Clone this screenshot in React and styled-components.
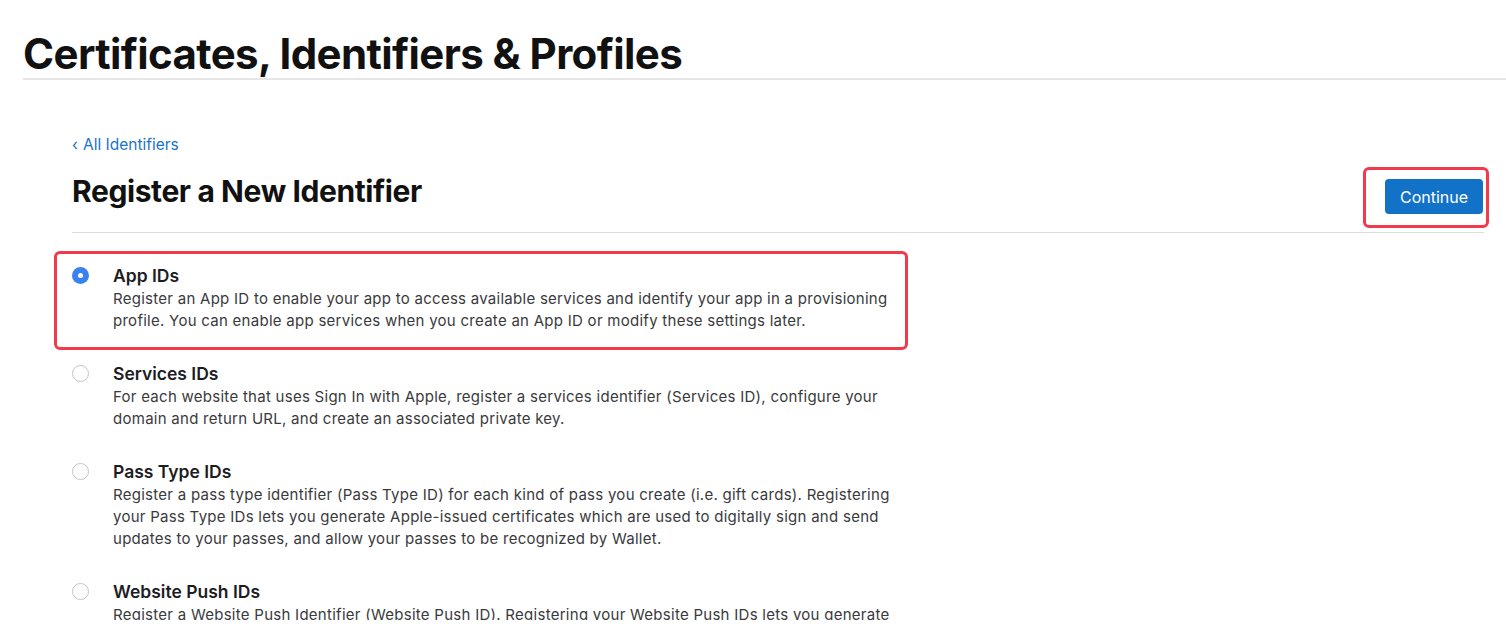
import styled, { createGlobalStyle, css } from "styled-components";

const GlobalStyle = createGlobalStyle`
  html, body {
    margin: 0;
    padding: 0;
    background: #fff;
  }
  body {
    font-family: Inter, "Noto Sans", "Liberation Sans", sans-serif;
    color: #1d1d1f;
    -webkit-font-smoothing: antialiased;
  }
`;

const Page = styled.div`
  height: 620px;
  overflow: hidden;
  padding-left: 23px;
`;

const Header = styled.header`
  border-bottom: 2px solid #e6e6e6;
  padding-top: 30px;
`;

const PageTitle = styled.h1`
  margin: 0;
  font-size: 42px;
  line-height: 48px;
  font-weight: 700;
  letter-spacing: -0.6px;
  color: #111;
`;

const Main = styled.main`
  padding: 54px 22px 0 49px;
`;

const BackLink = styled.a`
  display: inline-flex;
  align-items: center;
  gap: 5px;
  font-size: 15.5px;
  line-height: 20px;
  color: #1a73c9;
  text-decoration: none;
  cursor: pointer;
`;

const TitleBar = styled.div`
  display: flex;
  align-items: flex-end;
  justify-content: space-between;
  border-bottom: 1px solid #dcdcdc;
  padding: 19px 1px 18px 0;
`;

const SectionTitle = styled.h2`
  margin: 0 0 6px;
  font-size: 30px;
  line-height: 34px;
  font-weight: 700;
  letter-spacing: -0.4px;
  color: #111;
`;

const Highlight = styled.div`
  position: relative;

  &::after {
    content: "";
    position: absolute;
    top: ${(p) => p.$top}px;
    left: ${(p) => p.$left}px;
    right: ${(p) => p.$right}px;
    bottom: ${(p) => p.$bottom}px;
    border: 3px solid #f23a4c;
    border-radius: 6px;
    pointer-events: none;
  }
`;

const PrimaryButton = styled.button`
  display: block;
  background: #1272c7;
  color: #fff;
  border: none;
  border-radius: 4px;
  width: 98px;
  height: 35px;
  font-family: inherit;
  font-size: 16px;
  cursor: pointer;
`;

const OptionList = styled.div`
  display: flex;
  flex-direction: column;
  gap: 30px;
  padding-top: 31px;
  width: 822px;
`;

const Option = styled.label`
  display: grid;
  grid-template-columns: 41px 1fr;
  cursor: pointer;
`;

const Radio = styled.span`
  width: 17px;
  height: 17px;
  margin-top: 3px;
  box-sizing: border-box;
  border-radius: 50%;
  display: flex;
  align-items: center;
  justify-content: center;
  ${(p) =>
    p.$checked
      ? css`
          background: #3b82f1;
          &::before {
            content: "";
            width: 5px;
            height: 5px;
            border-radius: 50%;
            background: #fff;
          }
        `
      : css`
          background: #fff;
          border: 1px solid #c4c4c4;
        `}
`;

const OptionTitle = styled.div`
  font-size: 17.5px;
  line-height: 24px;
  font-weight: 600;
  color: #1d1d1f;
`;

const OptionText = styled.p`
  margin: 0;
  font-size: 15px;
  line-height: 22px;
  color: #3a3a3c;
  letter-spacing: 0.27px;
`;

const options = [
  {
    id: "app",
    title: "App IDs",
    text: "Register an App ID to enable your app to access available services and identify your app in a provisioning profile. You can enable app services when you create an App ID or modify these settings later.",
  },
  {
    id: "services",
    title: "Services IDs",
    text: "For each website that uses Sign In with Apple, register a services identifier (Services ID), configure your domain and return URL, and create an associated private key.",
  },
  {
    id: "pass",
    title: "Pass Type IDs",
    text: "Register a pass type identifier (Pass Type ID) for each kind of pass you create (i.e. gift cards). Registering your Pass Type IDs lets you generate Apple-issued certificates which are used to digitally sign and send updates to your passes, and allow your passes to be recognized by Wallet.",
  },
  {
    id: "push",
    title: "Website Push IDs",
    text: "Register a Website Push Identifier (Website Push ID). Registering your Website Push IDs lets you generate Apple-issued certificates which are used to digitally sign and send push notifications from your website to macOS.",
  },
];

const OptionRow = ({ option, checked }) => (
  <Option>
    <Radio $checked={checked} />
    <div>
      <OptionTitle>{option.title}</OptionTitle>
      <OptionText>{option.text}</OptionText>
    </div>
  </Option>
);

export default function App() {
  return (
    <>
      <GlobalStyle />
      <Page>
        <Header>
          <PageTitle>Certificates, Identifiers &amp; Profiles</PageTitle>
        </Header>
        <Main>
          <BackLink>
            <span>‹</span>
            <span>All Identifiers</span>
          </BackLink>
          <TitleBar>
            <SectionTitle>Register a New Identifier</SectionTitle>
            <Highlight $top={-12} $left={-22} $right={-6} $bottom={-14}>
              <PrimaryButton>Continue</PrimaryButton>
            </Highlight>
          </TitleBar>
          <OptionList>
            {options.map((o) =>
              o.id === "app" ? (
                <Highlight key={o.id} $top={-13} $left={-18} $right={-14} $bottom={-18}>
                  <OptionRow option={o} checked />
                </Highlight>
              ) : (
                <OptionRow key={o.id} option={o} />
              )
            )}
          </OptionList>
        </Main>
      </Page>
    </>
  );
}
